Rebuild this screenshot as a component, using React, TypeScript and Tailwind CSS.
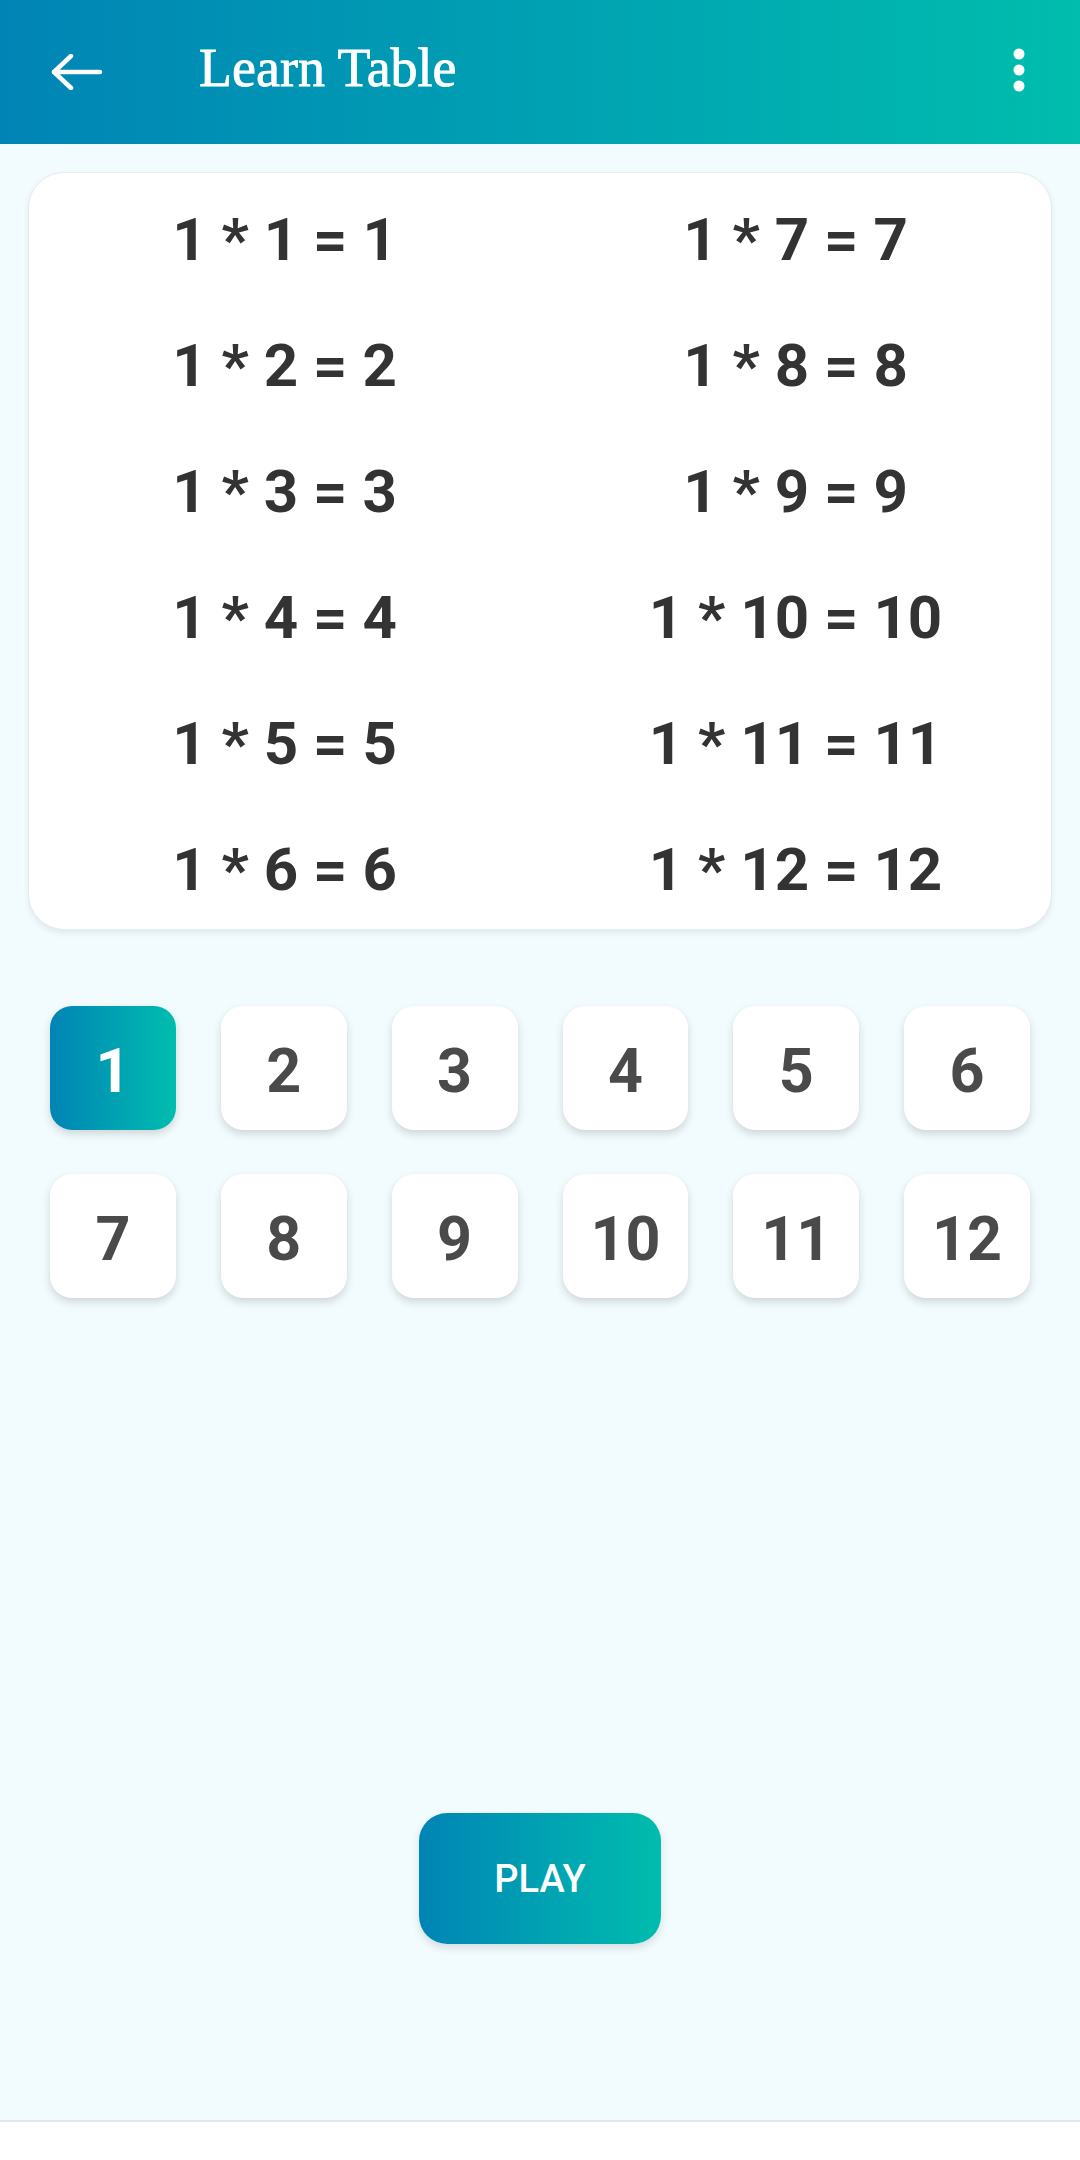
const rows = Array.from({ length: 12 }, (_, i) => i + 1);

const BackArrow = () => (
  <svg width="52" height="36" viewBox="0 0 52 36" fill="none" stroke="white" strokeWidth="4.5" strokeLinecap="round" strokeLinejoin="round">
    <path d="M3 18H49" />
    <path d="M20 2L3 18L20 34" />
  </svg>
);

const MoreDots = () => (
  <svg width="12" height="46" viewBox="0 0 12 46" fill="white">
    <circle cx="6" cy="6" r="5.5" />
    <circle cx="6" cy="22" r="5.5" />
    <circle cx="6" cy="38" r="5.5" />
  </svg>
);

export default function App() {
  const selected = 1;

  return (
    <div className="w-[1080px] h-[2160px] bg-[#f2fbfe] flex flex-col font-['Roboto',sans-serif]">
      {/* Toolbar */}
      <header className="h-[144px] shrink-0 bg-linear-to-r from-[#0184b5] to-[#00bdad] flex items-center pl-[51px] pr-[55px]">
        <BackArrow />
        <h1 className="ml-[96px] text-white text-[54px] leading-none font-['Liberation_Serif',serif] pb-[8px] [-webkit-text-stroke:0.8px_white]">
          Learn Table
        </h1>
        <div className="ml-auto pb-[2px]">
          <MoreDots />
        </div>
      </header>

      {/* Table card */}
      <div className="px-[28px] pt-[28px]">
        <div className="h-[758px] bg-white rounded-[36px] border border-[#e4ecef] shadow-[0_3px_6px_rgba(0,0,0,0.08)] grid grid-cols-2 grid-rows-6 grid-flow-col">
          {rows.map((n) => (
            <div key={n} className="flex items-center justify-center pt-[7px] text-[60px] font-bold text-[#333333] leading-none">
              {selected} * {n} = {selected * n}
            </div>
          ))}
        </div>
      </div>

      {/* Number picker */}
      <div className="px-[50px] mt-[76px] grid grid-cols-6 gap-x-[45px] gap-y-[44px]">
        {rows.map((n) =>
          n === selected ? (
            <button
              key={n}
              className="h-[124px] pt-[6px] rounded-[22px] bg-linear-to-r from-[#0184b5] to-[#00bdad] text-white text-[61px] font-bold leading-none flex items-center justify-center shadow-[0_4px_8px_rgba(0,0,0,0.15)]"
            >
              {n}
            </button>
          ) : (
            <button
              key={n}
              className="h-[124px] pt-[6px] rounded-[22px] bg-white text-[#4a4a4a] text-[61px] font-bold leading-none flex items-center justify-center shadow-[0_4px_8px_rgba(0,0,0,0.15)]"
            >
              {n}
            </button>
          )
        )}
      </div>

      {/* Play */}
      <div className="flex justify-center mt-[515px]">
        <button className="w-[242px] h-[131px] rounded-[28px] bg-linear-to-r from-[#0184b5] to-[#00bdad] text-white text-[38px] font-medium leading-none shadow-[0_4px_8px_rgba(0,0,0,0.12)]">
          PLAY
        </button>
      </div>

      <div className="mt-auto h-[40px] bg-white border-t-2 border-[#e2e6e8]" />
    </div>
  );
}
